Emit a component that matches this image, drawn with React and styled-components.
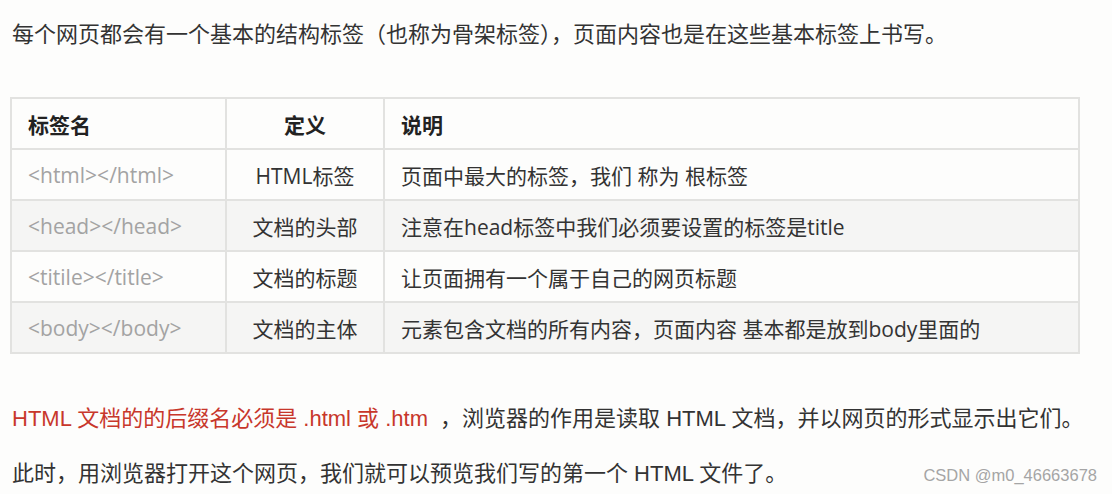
import React from 'react';
import styled, { createGlobalStyle } from 'styled-components';

const GlobalStyle = createGlobalStyle`
  body {
    margin: 0;
    background: #fdfdfc;
    font-family: "Open Sans", "Noto Sans CJK SC", sans-serif;
  }
`;

const Page = styled.div`
  position: relative;
  width: 1112px;
  height: 494px;
  overflow: hidden;
  padding: 18px 0 0 12px;
  box-sizing: border-box;
`;

const Paragraph = styled.p`
  margin: ${(p) => p.$top || 0}px 0 0;
  font-family: "Liberation Sans", "Noto Sans CJK SC", sans-serif;
  font-size: 22px;
  line-height: 33px;
  color: #333;
  white-space: nowrap;
`;

const Red = styled.span`
  color: #c8372b;
  margin-right: 6px;
`;

const Table = styled.table`
  margin: 46px 0 0 -2px;
  width: 1070px;
  border-collapse: collapse;
  table-layout: fixed;
  font-size: 21px;
`;

const Row = styled.tr`
  background: ${(p) => (p.$striped ? '#f5f5f4' : '#fdfdfc')};
`;

const HeadCell = styled.th`
  height: 49px;
  padding: 0 16px;
  border: 2px solid #e2e2e0;
  text-align: ${(p) => (p.$center ? 'center' : 'left')};
  font-weight: 700;
  color: #222;
`;

const Cell = styled.td`
  height: 49px;
  padding: 0 16px;
  border: 2px solid #e2e2e0;
  text-align: ${(p) => (p.$center ? 'center' : 'left')};
  color: ${(p) => (p.$muted ? '#a3a3a3' : '#333')};
  white-space: nowrap;
`;

const Watermark = styled.span`
  position: absolute;
  right: 15px;
  bottom: 9px;
  font-family: "Liberation Sans", sans-serif;
  font-size: 16.5px;
  color: #a5a5a5;
`;

const rows = [
  ['<html></html>', 'HTML标签', '页面中最大的标签，我们 称为 根标签'],
  ['<head></head>', '文档的头部', '注意在head标签中我们必须要设置的标签是title'],
  ['<titile></title>', '文档的标题', '让页面拥有一个属于自己的网页标题'],
  ['<body></body>', '文档的主体', '元素包含文档的所有内容，页面内容 基本都是放到body里面的'],
];

export default function App() {
  return (
    <Page>
      <GlobalStyle />
      <Paragraph>
        每个网页都会有一个基本的结构标签（也称为骨架标签），页面内容也是在这些基本标签上书写。
      </Paragraph>
      <Table>
        <colgroup>
          <col style={{ width: 215 }} />
          <col style={{ width: 158 }} />
          <col />
        </colgroup>
        <thead>
          <Row>
            <HeadCell>标签名</HeadCell>
            <HeadCell $center>定义</HeadCell>
            <HeadCell>说明</HeadCell>
          </Row>
        </thead>
        <tbody>
          {rows.map(([tag, name, desc], i) => (
            <Row key={tag} $striped={i % 2 === 1}>
              <Cell $muted>{tag}</Cell>
              <Cell $center>{name}</Cell>
              <Cell>{desc}</Cell>
            </Row>
          ))}
        </tbody>
      </Table>
      <Paragraph $top={48}>
        <Red>HTML 文档的的后缀名必须是 .html 或 .htm</Red> ，浏览器的作用是读取 HTML 文档，并以网页的形式显示出它们。
      </Paragraph>
      <Paragraph $top={22}>此时，用浏览器打开这个网页，我们就可以预览我们写的第一个 HTML 文件了。</Paragraph>
      <Watermark>CSDN @m0_46663678</Watermark>
    </Page>
  );
}
